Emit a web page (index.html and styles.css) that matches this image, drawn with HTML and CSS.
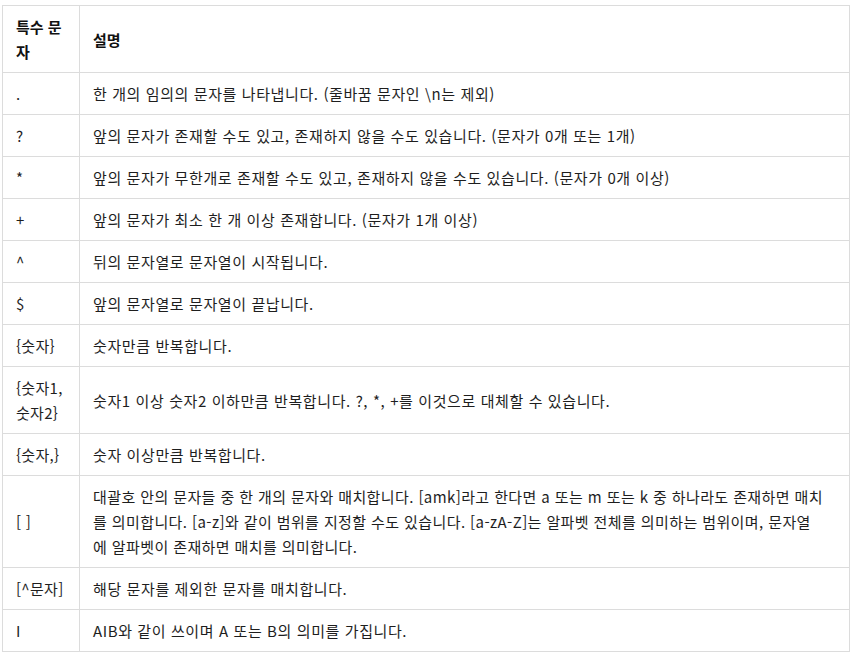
FILE: index.html
```html
<!DOCTYPE html>
<html lang="ko">
<head>
<meta charset="utf-8">
<link rel="stylesheet" href="styles.css">
</head>
<body>
<table class="regex-table">
  <colgroup><col class="col-key"><col class="col-desc"></colgroup>
  <thead>
    <tr class="row-head"><th>특수 문자</th><th>설명</th></tr>
  </thead>
  <tbody>
    <tr><td>.</td><td>한 개의 임의의 문자를 나타냅니다. (줄바꿈 문자인 \n는 제외)</td></tr>
    <tr><td>?</td><td>앞의 문자가 존재할 수도 있고, 존재하지 않을 수도 있습니다. (문자가 0개 또는 1개)</td></tr>
    <tr><td>*</td><td>앞의 문자가 무한개로 존재할 수도 있고, 존재하지 않을 수도 있습니다. (문자가 0개 이상)</td></tr>
    <tr><td>+</td><td>앞의 문자가 최소 한 개 이상 존재합니다. (문자가 1개 이상)</td></tr>
    <tr><td>^</td><td>뒤의 문자열로 문자열이 시작됩니다.</td></tr>
    <tr><td>$</td><td>앞의 문자열로 문자열이 끝납니다.</td></tr>
    <tr><td>{숫자}</td><td>숫자만큼 반복합니다.</td></tr>
    <tr><td>{숫자1, 숫자2}</td><td>숫자1 이상 숫자2 이하만큼 반복합니다. ?, *, +를 이것으로 대체할 수 있습니다.</td></tr>
    <tr><td>{숫자,}</td><td>숫자 이상만큼 반복합니다.</td></tr>
    <tr><td>[ ]</td><td><span class="line">대괄호 안의 문자들 중 한 개의 문자와 매치합니다. [amk]라고 한다면 a 또는 m 또는 k 중 하나라도 존재하면 매치</span><br><span class="line">를 의미합니다. [a-z]와 같이 범위를 지정할 수도 있습니다. [a-zA-Z]는 알파벳 전체를 의미하는 범위이며, 문자열</span><br><span class="line">에 알파벳이 존재하면 매치를 의미합니다.</span></td></tr>
    <tr><td>[^문자]</td><td>해당 문자를 제외한 문자를 매치합니다.</td></tr>
    <tr><td>I</td><td>AIB와 같이 쓰이며 A 또는 B의 의미를 가집니다.</td></tr>
  </tbody>
</table>
</body>
</html>
```

FILE: styles.css
```css
html, body {
  margin: 0;
  background: #ffffff;
}
body {
  padding: 5px 0 0 2px;
  font-family: "Noto Sans CJK KR", "Noto Sans", sans-serif;
  font-size: 15px;
  color: #1e1e1e;
}
.regex-table {
  width: 848px;
  table-layout: fixed;
  border-collapse: collapse;
  border: 1px solid #d3d3d3;
}
.col-key { width: 77px; }
.regex-table th,
.regex-table td {
  border: 1px solid #dcdcdc;
  padding: 8px 13px;
  line-height: 25px;
  text-align: left;
  vertical-align: middle;
}
.regex-table th {
  font-weight: 700;
  color: #111111;
}
.regex-table tbody td {
  height: 25px;
  letter-spacing: 0.6px;
}
.regex-table tbody td:first-child {
  letter-spacing: 0.3px;
}
.line {
  white-space: nowrap;
  letter-spacing: 0.4px;
}
```
